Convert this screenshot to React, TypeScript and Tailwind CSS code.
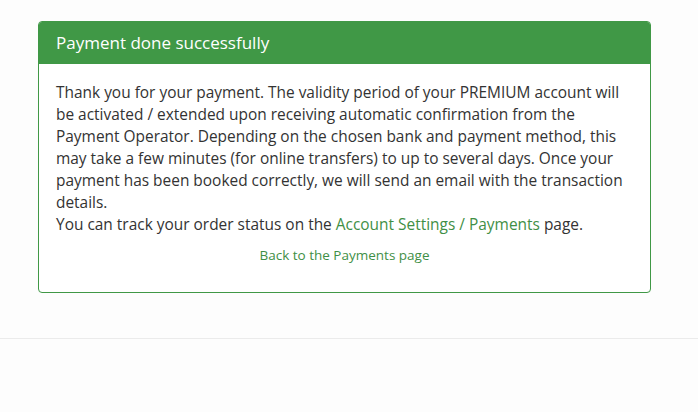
export default function App() {
  return (
    <div className="min-h-[412px] bg-[#fdfdfd] pt-[21px] font-['Open_Sans',sans-serif] text-[#333]">
      <div className="ml-[38px] w-[613px] overflow-hidden rounded-[4px] border border-[#409846] bg-white">
        <div className="bg-[#409846] px-[17px] pb-[9px] pt-[8px] text-[17px] leading-[25px] text-white">
          Payment done successfully
        </div>
        <div className="px-[17px] pb-[27px] pt-[17px]">
          <p className="text-[15.45px] leading-[22px]">
            Thank you for your payment. The validity period of your PREMIUM account will be
            activated / extended upon receiving automatic confirmation from the Payment Operator.
            Depending on the chosen bank and payment method, this may take a few minutes (for
            online transfers) to up to several days. Once your payment has been booked correctly,
            we will send an email with the transaction details.
            <br />
            You can track your order status on the{" "}
            <a href="#" className="text-[#3f8f46]">
              Account Settings / Payments
            </a>{" "}
            page.
          </p>
          <div className="mt-[10px] text-center text-[13.5px] leading-[20px]">
            <a href="#" className="text-[#3f8f46]">
              Back to the Payments page
            </a>
          </div>
        </div>
      </div>
      <div className="mt-[45px] border-t border-[#ebebeb]" />
    </div>
  );
}
